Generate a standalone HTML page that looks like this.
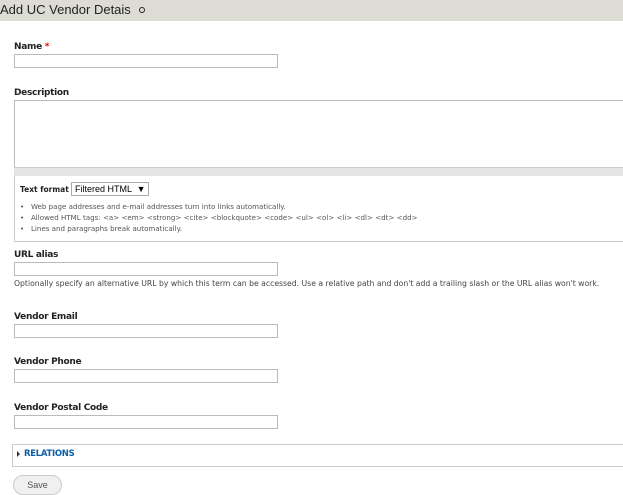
<!DOCTYPE html>
<html><head><style>
body{margin:0;width:623px;height:492px;overflow:hidden;background:#fff;font-family:"DejaVu Sans","Liberation Sans",sans-serif;position:relative}
.a{position:absolute}
.lbl{position:absolute;left:14px;font-size:9px;font-weight:bold;color:#222;letter-spacing:-0.3px}
.in{position:absolute;left:14px;width:262px;height:12px;border:1px solid #bbb;background:#fff}
.sm{font-size:7.1px;color:#555}
</style></head><body>
<div class="a" style="left:0;top:0;width:623px;height:21px;background:#dcdcd4"></div>
<div class="a" style="left:0;top:2px;font-size:13px;color:#222;font-family:'Liberation Sans',sans-serif">Add UC Vendor Detais</div>
<div class="a" style="left:139px;top:7px;width:4px;height:4px;border:1.5px solid #222;border-radius:50%"></div>
<div class="lbl" style="top:42px">Name <span style="color:#e00">*</span></div>
<div class="in" style="top:54px"></div>
<div class="lbl" style="top:88px">Description</div>
<div class="a" style="left:14px;top:100px;width:609px;height:66px;border:1px solid #bbb;border-right:none;border-bottom:none"></div>
<div class="a" style="left:14px;top:167px;width:609px;height:8px;background:#e4e4e4;border-top:1px solid #ccc"></div>
<div class="a" style="left:14px;top:175px;width:609px;height:66px;border-left:1px solid #ccc;border-bottom:1px solid #ccc"></div>
<div class="a" style="left:20px;top:185px;font-size:7.5px;font-weight:bold;color:#222">Text format</div>
<div class="a" style="left:71px;top:182px;border:1px solid #aaa;font-size:9px;font-family:'Liberation Sans',sans-serif;line-height:12px;padding-left:3px;box-sizing:border-box;width:78px;height:14px">Filtered HTML &nbsp;▼</div>
<div class="a sm" style="left:20px;top:201px;line-height:11px">•&nbsp;&nbsp; Web page addresses and e-mail addresses turn into links automatically.<br>•&nbsp;&nbsp; Allowed HTML tags: &lt;a&gt; &lt;em&gt; &lt;strong&gt; &lt;cite&gt; &lt;blockquote&gt; &lt;code&gt; &lt;ul&gt; &lt;ol&gt; &lt;li&gt; &lt;dl&gt; &lt;dt&gt; &lt;dd&gt;<br>•&nbsp;&nbsp; Lines and paragraphs break automatically.</div>
<div class="lbl" style="top:250px">URL alias</div>
<div class="in" style="top:262px"></div>
<div class="a" style="left:14px;top:279px;font-size:7.7px;color:#444">Optionally specify an alternative URL by which this term can be accessed. Use a relative path and don't add a trailing slash or the URL alias won't work.</div>
<div class="lbl" style="top:312px">Vendor Email</div>
<div class="in" style="top:324px"></div>
<div class="lbl" style="top:357px">Vendor Phone</div>
<div class="in" style="top:369px"></div>
<div class="lbl" style="top:403px">Vendor Postal Code</div>
<div class="in" style="top:415px"></div>
<div class="a" style="left:12px;top:444px;width:611px;height:21px;border:1px solid #ccc;border-right:none"></div>
<div class="a" style="left:17px;top:451px;width:0;height:0;border-left:3px solid #333;border-top:3px solid transparent;border-bottom:3px solid transparent"></div>
<div class="a" style="left:24px;top:449px;font-size:8.5px;font-weight:bold;color:#0a5fa8;letter-spacing:-0.3px">RELATIONS</div>
<div class="a" style="left:13px;top:475px;width:47px;height:18px;border:1px solid #ccc;border-radius:10px;background:#f0f0f0;font-size:9px;color:#555;text-align:center;line-height:18px;font-family:'Liberation Sans',sans-serif">Save</div>
</body></html>
